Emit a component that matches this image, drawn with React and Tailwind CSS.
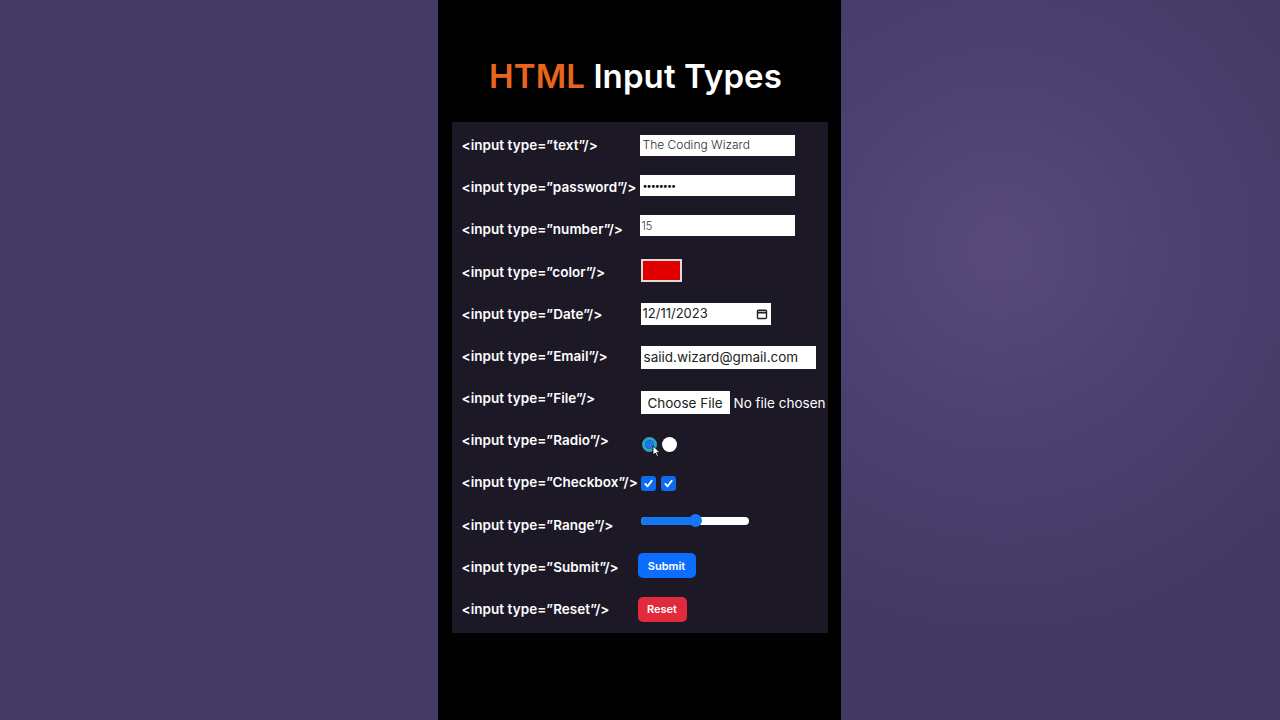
import React from 'react';

const font = { fontFamily: "Inter, 'Noto Sans', sans-serif" };

function Label({ type }) {
    return (
        <span className="text-white text-[13.5px] font-semibold tracking-[0.05px] whitespace-nowrap">
            {'<input type=”' + type + '”/>'}
        </span>
    );
}

function CalendarIcon() {
    return (
        <svg width="12" height="12" viewBox="0 0 12 12" fill="none" stroke="#222" strokeWidth="1.4">
            <rect x="1.5" y="2.2" width="9" height="8.3" rx="1" />
            <line x1="1.5" y1="4.6" x2="10.5" y2="4.6" strokeWidth="1.8" />
        </svg>
    );
}

function Cursor() {
    return (
        <svg className="absolute left-[10px] top-[8px]" width="9" height="12" viewBox="0 0 9 12">
            <path d="M1 1 L1 10 L3.3 8 L5 11.5 L6.4 10.8 L4.8 7.4 L8 7.4 Z" fill="white" stroke="black" strokeWidth="0.8" />
        </svg>
    );
}

function Check() {
    return (
        <span className="w-[15px] h-[15px] rounded-[3px] bg-[#0b6cf0] flex items-center justify-center">
            <svg width="11" height="11" viewBox="0 0 12 12" fill="none" stroke="white" strokeWidth="2" strokeLinecap="round" strokeLinejoin="round">
                <path d="M2.5 6.5 L5 9 L9.5 3" />
            </svg>
        </span>
    );
}

export default function App() {
    const rows = [
        {
            type: 'text',
            field: (
                <div className="mb-[0px] w-[155px] h-[21px] bg-white flex items-center pl-[3px] text-[12px] text-[#2e2e2e] font-light">
                    The Coding Wizard
                </div>
            ),
        },
        {
            type: 'password',
            field: (
                <div className="mb-[4px] w-[155px] h-[21px] bg-white flex items-center pl-[3px] text-[9px] text-black tracking-[-1px]">
                    ••••••••
                </div>
            ),
        },
        {
            type: 'number',
            field: (
                <div className="mb-[7px] w-[155px] h-[21px] bg-white flex items-center pl-[2px] text-[11px] text-[#333] font-light">
                    15
                </div>
            ),
        },
        {
            type: 'color',
            field: (
                <div className="mb-[3px] ml-[1px] w-[41px] h-[23px] border-2 border-[#e8d8d8] bg-[#e00000]" />
            ),
        },
        {
            type: 'Date',
            field: (
                <div className="mb-[0px] ml-[1px] w-[130px] h-[22px] bg-white flex items-center justify-between pl-[2px] pr-[3px] text-[13px] text-[#222]">
                    <span>12/11/2023</span>
                    <CalendarIcon />
                </div>
            ),
        },
        {
            type: 'Email',
            field: (
                <div className="mt-[3px] ml-[1px] w-[175px] h-[23px] bg-white flex items-center pl-[3px] text-[13.5px] text-[#222] whitespace-nowrap">
                    saiid.wizard@gmail.com
                </div>
            ),
        },
        {
            type: 'File',
            field: (
                <div className="ml-[1px] flex items-center gap-[4px] whitespace-nowrap mt-[9px]">
                    <span className="w-[89px] h-[23px] bg-white flex items-center justify-center text-[13.5px] text-[#222]">
                        Choose File
                    </span>
                    <span className="text-[13.5px] text-white">No file chosen</span>
                </div>
            ),
        },
        {
            type: 'Radio',
            field: (
                <div className="relative ml-[2px] flex items-center gap-[5px] mt-[8px]">
                    <span className="w-[15px] h-[15px] rounded-full border-[3px] border-[#2fa3b8] bg-[#0f6ad8] flex items-center justify-center">
                        <span className="w-[7px] h-[7px] rounded-full bg-[#1a78e8]" />
                    </span>
                    <span className="w-[15px] h-[15px] rounded-full bg-white" />
                    <Cursor />
                </div>
            ),
        },
        {
            type: 'Checkbox',
            field: (
                <div className="ml-[1px] mt-[1px] flex items-center gap-[5px]">
                    <Check />
                    <Check />
                </div>
            ),
        },
        {
            type: 'Range',
            field: (
                <div className="relative ml-[1px] w-[108px] h-[8px] rounded-full bg-white mb-[7px]">
                    <div className="h-full w-[56px] rounded-full bg-[#1677f2]" />
                    <div className="absolute left-[48px] top-[-3px] w-[13px] h-[13px] rounded-full bg-[#1677f2]" />
                </div>
            ),
        },
        {
            type: 'Submit',
            field: (
                <div className="ml-[-2px] w-[58px] h-[25px] rounded-[5px] bg-[#0d6efd] flex items-center justify-center text-[11px] font-semibold text-white mb-[2px]">
                    Submit
                </div>
            ),
        },
        {
            type: 'Reset',
            field: (
                <div className="ml-[-2px] w-[49px] h-[25px] rounded-[5px] bg-[#e12a3c] flex items-center justify-center text-[11px] font-semibold text-white">
                    Reset
                </div>
            ),
        },
    ];

    return (
        <div className="w-full h-[720px] flex overflow-hidden" style={font}>
            <div className="w-[438px] bg-[#453a63]" />

            {/* phone column */}
            <div className="w-[403px] bg-black flex flex-col items-center">
                <h1 className="mt-[56px] text-[33px] font-semibold leading-[40px] tracking-[0.1px] mr-[8px]">
                    <span className="text-[#e8661c]">HTML</span>{' '}
                    <span className="text-white">Input Types</span>
                </h1>

                <div className="mt-[26px] w-[376px] bg-[#1c1826] pl-[10px] pt-[2px] pb-[3px]">
                    {rows.map((r) => (
                        <div key={r.type} className="h-[42.2px] grid grid-cols-[178px_1fr] items-center">
                            <Label type={r.type} />
                            <div className="flex items-center">{r.field}</div>
                        </div>
                    ))}
                </div>
            </div>

            <div className="flex-1 bg-[radial-gradient(circle_at_160px_250px,#584b7b_0%,#4c4070_35%,#433862_75%)]" />
        </div>
    );
}
